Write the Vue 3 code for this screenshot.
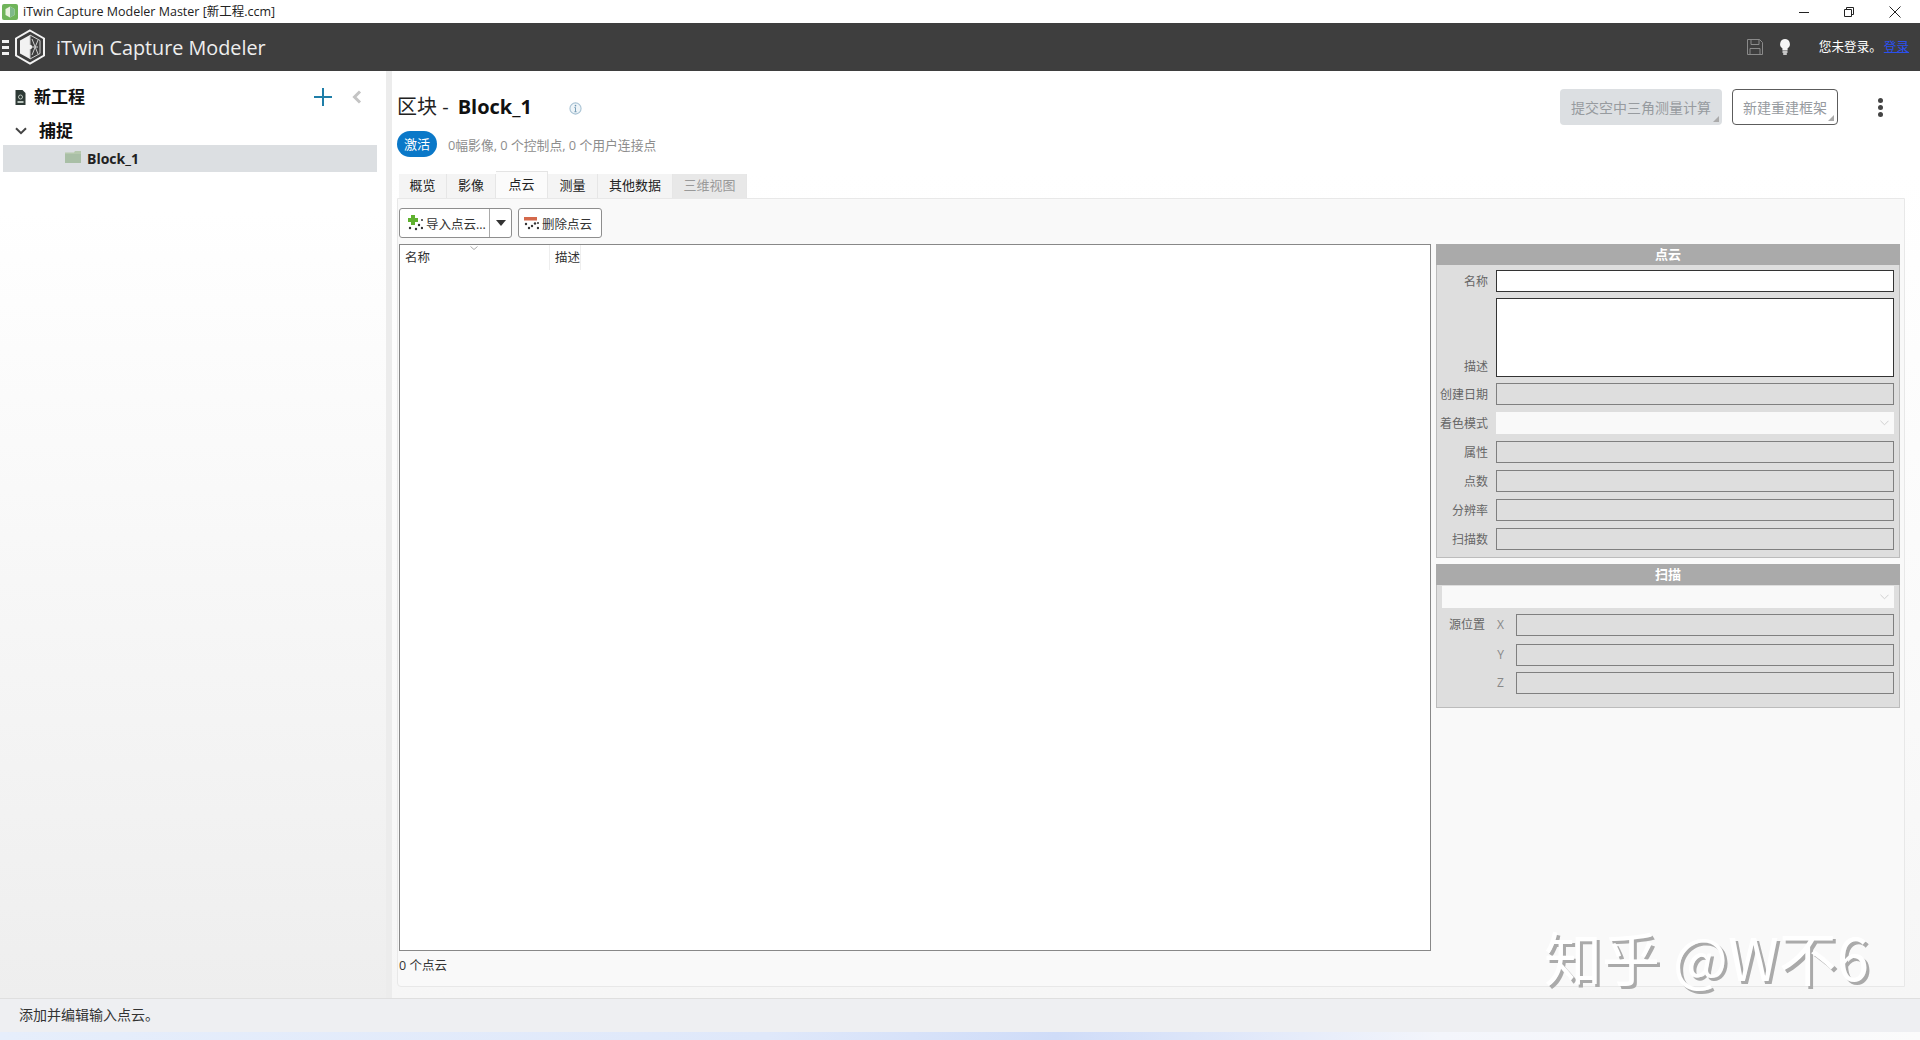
<script setup>
const tabs = [
  { label: '概览', w: 48 },
  { label: '影像', w: 49 },
  { label: '点云', w: 52, active: true },
  { label: '测量', w: 50 },
  { label: '其他数据', w: 75 },
  { label: '三维视图', w: 74, disabled: true }
]
const tabStyle = (t) => ({ width: t.w + 'px' })
const readonlyTop = ['创建日期']
const readonlyBottom = ['属性', '点数', '分辨率', '扫描数']
const axes = [
  { key: 'X', label: '源位置', h: 30 },
  { key: 'Y', label: '', h: 28 },
  { key: 'Z', label: '', h: 22 }
]
const axisStyle = (a) => ({ height: a.h + 'px' })
</script>

<template>
  <div class="app">
    <div class="titlebar">
      <svg class="appicon" viewBox="0 0 16 16" width="16" height="16">
        <rect x="0" y="0" width="16" height="16" rx="2" fill="#6fb45a" />
        <path d="M8 2.500 12.500 5v6L8 13.500 3.500 11V5z" fill="#e9f3df" />
        <path d="M8 2.500V13.500L12.500 11V5z" fill="#7fb98a" />
      </svg>
      <span class="titletext">iTwin Capture Modeler Master [新工程.ccm]</span>
      <div class="winctrls">
        <svg viewBox="0 0 12 12" width="12" height="12"><path d="M1 6.500h10" stroke="#222" fill="none" /></svg>
        <svg viewBox="0 0 12 12" width="12" height="12"><path d="M1.500 3.500h7v7h-7zM3.500 3.500v-2h7v7h-2" stroke="#222" fill="none" /></svg>
        <svg viewBox="0 0 14 14" width="14" height="14"><path d="M1.500 1.500l11 11M12.500 1.500l-11 11" stroke="#222" fill="none" /></svg>
      </div>
    </div>

    <header class="appbar">
      <div class="dots"><i></i><i></i><i></i></div>
      <svg class="logo" viewBox="0 0 32 36" width="32" height="36">
        <path d="M16 1.500 30 9.500v17L16 34.500 2 26.500v-17z" fill="none" stroke="#f2f2f2" stroke-width="2" />
        <path d="M16 6 6 11.500v13L16 30z" fill="#f2f2f2" />
        <path d="M16 6 26 11.500v13L16 30zM18 10l6 15M24 11l-6 15M18 18h6" fill="none" stroke="#cfcfcf" stroke-width="1" />
        <circle cx="16" cy="18" r="2.200" fill="#f2f2f2" />
      </svg>
      <span class="brand">iTwin Capture Modeler</span>
      <div class="appbar-right">
        <svg viewBox="0 0 16 16" width="16" height="16"><path d="M.5.500h12l3 3v12H.5zM4 .5v5h8v-5M3 15.500v-6h10v6" fill="none" stroke="#8a8a8a" /></svg>
        <svg class="bulb" viewBox="0 0 12 18" width="12" height="18"><path d="M6 1a5 5 0 0 0-2.600 9.200V12.500h5.200V10.200A5 5 0 0 0 6 1z" fill="#f4f4f4" /><path d="M3.500 14h5M4.200 16h3.600" stroke="#f4f4f4" stroke-width="1.300" /></svg>
        <span class="login">您未登录。<a class="link">登录</a></span>
      </div>
    </header>

    <main class="body">
      <aside class="sidebar">
        <div class="proj">
          <svg viewBox="0 0 10 15" width="11" height="15"><path d="M0 0h7l3 3v12H0z" fill="#2e3a36" /><circle cx="5" cy="7" r="2" fill="none" stroke="#b9c4bd" /><rect x="2" y="11" width="6" height="2" fill="#b9c4bd" /></svg>
          <span class="proj-name">新工程</span>
          <svg class="plus" viewBox="0 0 18 18" width="18" height="18"><path d="M9 0v18M0 9h18" stroke="#1f7ea8" stroke-width="2" fill="none" /></svg>
          <svg class="collapse" viewBox="0 0 10 14" width="10" height="14"><path d="M8 1.500 2.500 7 8 12.500" stroke="#c4c4c4" stroke-width="3" fill="none" /></svg>
        </div>
        <div class="capture">
          <svg viewBox="0 0 12 8" width="12" height="8"><path d="M1 1.200 6 6.200l5-5" stroke="#444" stroke-width="2" fill="none" /></svg>
          <span class="capture-name">捕捉</span>
        </div>
        <div class="block-row">
          <svg viewBox="0 0 16 12" width="16" height="12"><path d="M0 1.500h9l1-1.500h6v12H0z" fill="#b6c9ae" /><path d="M0 3h16v9H0z" fill="#a9bfa6" /></svg>
          <span>Block_1</span>
        </div>
      </aside>

      <div class="splitter"></div>

      <section class="content">
        <div class="head">
          <div class="head-left">
            <div class="title-row">
              <span class="title-cn">区块 -</span>
              <span class="title-en">Block_1</span>
              <svg class="info" viewBox="0 0 14 14" width="13" height="13"><circle cx="7" cy="7" r="6" fill="#eef4f8" stroke="#a9c3d4" stroke-width="1.200" /><path d="M7 6v4.500M5.800 10.500h2.400M5.800 6H7" stroke="#6f97b2" fill="none" /><circle cx="7" cy="3.900" r=".9" fill="#6f97b2" /></svg>
            </div>
            <div class="state-row">
              <span class="badge">激活</span>
              <span class="state-text">0幅影像, 0 个控制点, 0 个用户连接点</span>
            </div>
          </div>
          <div class="head-right">
            <button class="act act-disabled">提交空中三角测量计算<i class="corner"></i></button>
            <button class="act act-outline">新建重建框架<i class="corner"></i></button>
            <div class="kebab"><i></i><i></i><i></i></div>
          </div>
        </div>

        <nav class="tabs">
          <div
            v-for="t in tabs"
            :key="t.label"
            class="tab"
            :class="{ active: t.active, disabled: t.disabled }"
            :style="tabStyle(t)"
          >{{ t.label }}</div>
        </nav>

        <div class="pane">
          <div class="toolbar">
            <div class="btn split">
              <div class="split-main">
                <svg viewBox="0 0 16 16" width="16" height="16">
                  <path d="M4 0h4v3h3v4H8v3H4V7H1V3h3z" fill="#5fb12f" />
                  <g fill="#333"><circle cx="12" cy="10" r="1.200" /><circle cx="15" cy="5" r="1" /><circle cx="15" cy="13" r="1.200" /><circle cx="9" cy="14" r="1.200" /><circle cx="3" cy="13" r="1.200" /></g>
                </svg>
                <span>导入点云...</span>
              </div>
              <div class="split-caret"><i></i></div>
            </div>
            <div class="btn del">
              <svg viewBox="0 0 16 16" width="16" height="16">
                <rect x="1" y="2" width="13" height="3.500" fill="#d4694c" />
                <g fill="#333"><circle cx="12" cy="8.500" r="1.200" /><circle cx="15" cy="8" r="1" /><circle cx="15" cy="13" r="1.200" /><circle cx="9" cy="11" r="1.200" /><circle cx="3" cy="9" r="1.200" /><circle cx="6" cy="13" r="1.200" /></g>
              </svg>
              <span>删除点云</span>
            </div>
          </div>

          <div class="work">
            <div class="table-col">
              <div class="table">
                <div class="thead">
                  <div class="th th-name">名称<svg class="sort" viewBox="0 0 8 4" width="8" height="4"><path d="M.5.500 4 3.500 7.500.5" stroke="#aaa" fill="none" /></svg></div>
                  <div class="th">描述</div>
                </div>
              </div>
              <div class="count">0 个点云</div>
            </div>

            <div class="props">
              <div class="group">
                <div class="group-head">点云</div>
                <div class="group-body cloud">
                  <div class="field"><label>名称</label><div class="input editable"></div></div>
                  <div class="field tall"><label>描述</label><div class="input editable area"></div></div>
                  <div v-for="l in readonlyTop" :key="l" class="field"><label>{{ l }}</label><div class="input"></div></div>
                  <div class="field"><label>着色模式</label><div class="combo"><svg viewBox="0 0 10 6" width="9" height="6"><path d="M.5.500 5 5l4.500-4.500" stroke="#ccc" fill="none" /></svg></div></div>
                  <div v-for="l in readonlyBottom" :key="l" class="field"><label>{{ l }}</label><div class="input"></div></div>
                </div>
              </div>
              <div class="group second">
                <div class="group-head">扫描</div>
                <div class="group-body scan">
                  <div class="combo wide"><svg viewBox="0 0 10 6" width="9" height="6"><path d="M.5.500 5 5l4.500-4.500" stroke="#ccc" fill="none" /></svg></div>
                  <div v-for="a in axes" :key="a.key" class="axis" :style="axisStyle(a)">
                    <label class="axis-label">{{ a.label }}</label>
                    <span class="axis-key">{{ a.key }}</span>
                    <div class="input"></div>
                  </div>
                </div>
              </div>
            </div>
          </div>
          <div class="watermark">知乎 @W不6</div>
        </div>
      </section>
    </main>

    <footer class="status">添加并编辑输入点云。</footer>
    <div class="strip"></div>
  </div>
</template>

<style>
html, body { margin: 0; overflow: hidden; background: #fff; }
</style>

<style scoped>
.app {
  width: 1920px; height: 1040px; display: flex; flex-direction: column; overflow: hidden;
  font-family: "Open Sans", "Noto Sans CJK SC", sans-serif; color: #333; background: #fff;
}
.titlebar { height: 23px; flex: none; display: flex; align-items: center; padding-left: 2px; background: #fff; }
.appicon { flex: none; }
.titletext { margin-left: 5px; font-size: 12.5px; line-height: 23px; color: #222; }
.winctrls { margin-left: auto; display: flex; align-items: center; gap: 33px; padding-right: 18px; }

.appbar { height: 48px; flex: none; display: flex; align-items: center; background: #3e3e3e; color: #f0f0f0; }
.dots { width: 7px; margin-left: 2px; display: flex; flex-direction: column; gap: 3px; }
.dots i { display: block; height: 3px; background: #f0f0f0; }
.logo { margin-left: 5px; }
.brand { margin-left: 10px; margin-top: 1px; font-size: 19.8px; line-height: 48px; color: #eee; }
.appbar-right { margin-left: auto; display: flex; align-items: center; padding-right: 11px; }
.bulb { margin-left: 16px; }
.login { margin-left: 28px; margin-top: -3px; font-size: 12.6px; color: #fff; }
.link { margin-left: 2px; color: #2b50ee; text-decoration: underline; }

.body { flex: 1; min-height: 0; display: flex; }
.sidebar { width: 386px; flex: none; padding: 17px 0 0 3px; box-sizing: border-box; background: linear-gradient(#fff 0, #fff 140px, #eee 100%); }
.proj { display: flex; align-items: center; height: 18px; padding-left: 12px; }
.proj-name { margin-left: 8px; font-size: 17px; font-weight: 700; line-height: 18px; color: #111; }
.plus { margin-left: 229px; }
.collapse { margin-left: 20px; }
.capture { display: flex; align-items: center; height: 20px; margin-top: 15px; padding-left: 12px; }
.capture-name { margin-left: 12px; font-size: 17px; font-weight: 700; line-height: 20px; color: #111; }
.block-row {
  width: 374px; height: 27px; margin-top: 4px; padding-left: 62px; box-sizing: border-box;
  display: flex; align-items: center; gap: 6px; background: #dcdfe2;
  font-size: 14px; font-weight: 700; color: #222;
}
.block-row svg { margin-top: -4px; }

.splitter { width: 6px; flex: none; background: #ececec; }
.content { flex: 1; min-width: 0; display: flex; flex-direction: column; padding: 14px 15px 11px 5px; background: linear-gradient(#fff, #fff 100px, #f6f6f6); }
.head { display: flex; justify-content: space-between; height: 89px; flex: none; }
.head-right { display: flex; align-items: flex-start; padding-top: 4px; }
.title-row { display: flex; align-items: center; height: 30px; margin-top: 7px; }
.title-cn { font-size: 20px; line-height: 30px; color: #222; }
.title-en { margin-left: 9px; font-size: 20px; font-weight: 700; line-height: 30px; color: #111; }
.info { margin-left: 37px; margin-top: 2px; }
.state-row { display: flex; align-items: center; margin-top: 9px; }
.badge { width: 40px; height: 26px; border-radius: 13px; background: #0a78c8; color: #fff; font-size: 13px; line-height: 26px; text-align: center; }
.state-text { margin-left: 11px; font-size: 12.8px; color: #8d8d8d; }
.act { position: relative; height: 36px; padding: 0; border-radius: 4px; font-family: inherit; font-size: 14px; color: #979b9f; }
.act-disabled { width: 162px; border: none; background: #dcdfe2; }
.act-outline { width: 106px; margin-left: 10px; border: 1px solid #5c5c5c; background: #fff; }
.corner { position: absolute; right: 3px; bottom: 3px; width: 0; height: 0; border-left: 6px solid transparent; border-bottom: 6px solid #aaa; }
.kebab { width: 6px; margin: 9px 21px 0 40px; display: flex; flex-direction: column; gap: 2px; }
.kebab i { width: 5px; height: 5px; border-radius: 50%; background: #444; display: block; }

.tabs { display: flex; height: 24px; flex: none; align-items: flex-end; padding-left: 2px; }
.tab { height: 24px; line-height: 23px; text-align: center; font-size: 13px; color: #222; background: #f4f4f4; border-right: 1px solid #e6e6e6; box-sizing: border-box; }
.tab.active { height: 27px; line-height: 25px; background: #fbfbfb; border-top: 1px solid #e4e4e4; }
.tab.disabled { color: #999; background: #e8e8e8; }

.pane { position: relative; flex: 1; min-height: 0; display: flex; flex-direction: column; padding: 9px 4px 0 1px; background: #f9f9f9; border: 1px solid #e8e8e8; border-radius: 0 0 0 4px; }
.toolbar { display: flex; gap: 6px; flex: none; }
.btn { height: 30px; box-sizing: border-box; border: 1px solid #8e8e8e; border-radius: 3px; background: #fff; display: flex; align-items: center; font-size: 13px; color: #333; }
.split { width: 113px; }
.split-main { width: 90px; height: 100%; box-sizing: border-box; display: flex; align-items: center; gap: 3px; padding-left: 7px; border-right: 1px solid #aaa; font-size: 12.5px; }
.split-caret { flex: 1; display: flex; justify-content: center; }
.split-caret i { width: 0; height: 0; border: 5px solid transparent; border-top: 6px solid #333; border-bottom: 0; }
.del { width: 84px; padding-left: 4px; gap: 3px; font-size: 12.5px; }

.work { flex: 1; min-height: 0; display: flex; margin-top: 6px; }
.table-col { width: 1032px; flex: none; display: flex; flex-direction: column; }
.table { height: 707px; flex: none; box-sizing: border-box; background: #fff; border: 1px solid #888; }
.thead { display: flex; height: 25px; }
.th { position: relative; padding-left: 5px; font-size: 12.5px; line-height: 25px; color: #333; border-right: 1px solid #eee; }
.th-name { width: 144px; }
.sort { position: absolute; left: 70px; top: 1px; }
.count { margin-top: 6px; font-size: 12.5px; line-height: 18px; color: #333; }

.props { width: 464px; margin-left: 5px; flex: none; }
.group { background: #dedede; border: 1px solid #bcbcbc; border-top: 0; box-sizing: border-box; }
.second { margin-top: 6px; }
.group-head { margin: 0 -1px; height: 21px; background: #aaa; color: #fff; font-size: 13px; font-weight: 700; line-height: 21px; text-align: center; }
.group-body { padding-right: 5px; display: flex; flex-direction: column; }
.cloud { padding-top: 5px; padding-bottom: 7px; gap: 7px; }
.field { display: flex; align-items: flex-end; height: 22px; }
.field.tall { height: 79px; margin: -1px 0; }
.field label { width: 51px; margin-right: 8px; flex: none; text-align: right; font-size: 12px; line-height: 20px; color: #666; }
.input { flex: 1; height: 100%; box-sizing: border-box; border: 1px solid #7f7f7f; background: #dedede; }
.editable { border-color: #333; background: #fff; }
.combo { flex: 1; height: 100%; box-sizing: border-box; background: #f9f9f9; display: flex; align-items: center; justify-content: flex-end; padding-right: 5px; }
.combo.wide { flex: none; height: 22px; margin: 1px 0 6px 5px; }
.scan { padding-bottom: 13px; }
.axis { display: flex; align-items: flex-start; }
.axis .input { height: 22px; flex: 1; }
.axis-label { width: 48px; flex: none; text-align: right; font-size: 12px; line-height: 22px; color: #666; }
.axis-key { width: 31px; flex: none; text-align: center; font-size: 12px; line-height: 22px; color: #888; }
.watermark {
  position: absolute; right: 35px; top: 727px; font-family: "Noto Sans CJK SC", sans-serif;
  font-size: 58px; line-height: 60px; white-space: nowrap; color: #fff; text-shadow: 3px 3px 0 #aaa;
}

.status { height: 34px; flex: none; box-sizing: border-box; padding-left: 19px; font-size: 14px; line-height: 31px; color: #333; background: #eeeff2; border-top: 1px solid #dfdfdf; }
.strip { height: 8px; flex: none; background: linear-gradient(90deg, #e6eefb 0, #dfe8fa 40%, #cfdcf8 55%, #f3f5fb 75%, #fbfbfb 100%); }
</style>
